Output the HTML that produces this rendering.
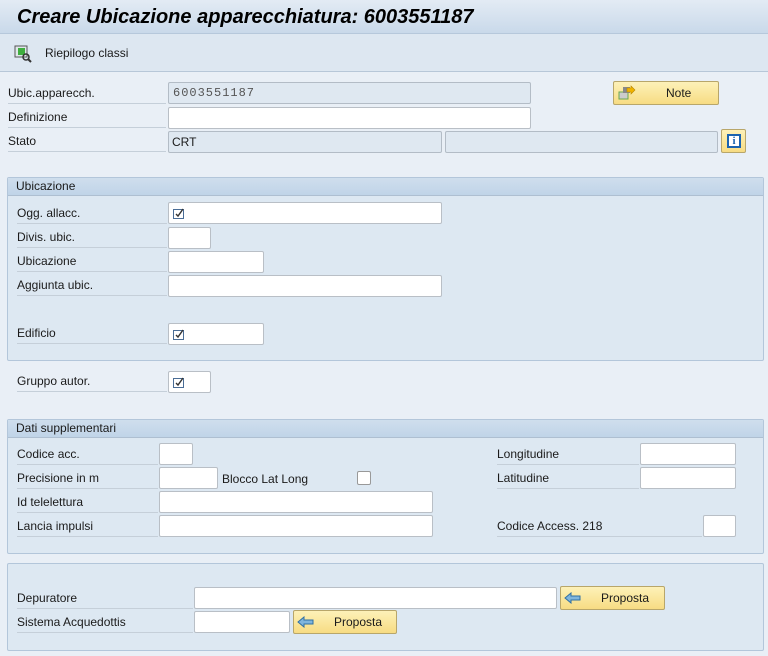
<!DOCTYPE html>
<html><head><meta charset="utf-8"><style>
*{box-sizing:border-box;margin:0;padding:0}
body{width:768px;height:656px;background:#e9eff6;font-family:"Liberation Sans",sans-serif;font-size:12px;color:#1a1a1a;position:relative;overflow:hidden}
.a{position:absolute}
.title{left:0;top:0;width:768px;height:34px;background:linear-gradient(#e3ebf4,#c9d9ea);border-bottom:1px solid #b6c8db}
.title span{position:absolute;left:17px;top:6px;font-size:20px;font-weight:bold;font-style:italic;color:#000}
.tb{left:0;top:34px;width:768px;height:38px;background:#dde7f1;border-bottom:1px solid #b7c7d8}
.lbl{position:absolute;border-bottom:1px solid #c5cfd9;height:22px;line-height:23px;white-space:nowrap}
.in{position:absolute;background:#fff;border:1px solid #b9bfc6;border-radius:2px;height:22px}
.ro{background:#dfe8f1;border-color:#b3bcc6}
.grp{position:absolute;background:#dde8f2;border:1px solid #b3c6da;border-radius:2px}
.gh{position:absolute;left:0;top:0;right:0;height:18px;background:linear-gradient(#cfdeed,#c0d4e8);border-bottom:1px solid #aebfd1;padding-left:8px;line-height:17px}
.btn{position:absolute;background:linear-gradient(#fdf1b8,#f7dc83);border:1px solid #b8a66a;border-radius:2px;height:24px;line-height:22px}
.chk{position:absolute;left:3px;top:4px}
</style></head><body>
<div class="a title"><span>Creare Ubicazione apparecchiatura: 6003551187</span></div>
<div class="a tb">
<svg class="a" style="left:13px;top:10px" width="20" height="20" viewBox="0 0 20 20"><rect x="2" y="2" width="12" height="11" fill="#e0e6ea" stroke="#555"/><rect x="5" y="4" width="7" height="7" fill="#3fae3f"/><circle cx="13" cy="13" r="3" fill="none" stroke="#333" stroke-width="1.5"/><path d="M15 15l3 3" stroke="#333" stroke-width="2"/></svg>
<span class="a" style="left:45px;top:12px">Riepilogo classi</span></div>

<div class="lbl" style="left:8px;top:82px;width:158px">Ubic.apparecch.</div>
<div class="in ro" style="left:168px;top:82px;width:363px;font-family:'Liberation Mono',monospace;color:#555;line-height:20px;padding-left:4px;letter-spacing:1px">6003551187</div>
<div class="lbl" style="left:8px;top:106px;width:158px">Definizione</div>
<div class="in" style="left:168px;top:107px;width:363px"></div>
<div class="lbl" style="left:8px;top:130px;width:158px">Stato</div>
<div class="in ro" style="left:168px;top:131px;width:274px;line-height:20px;padding-left:3px">CRT</div>
<div class="in ro" style="left:445px;top:131px;width:273px"></div>
<div class="btn" style="left:721px;top:129px;width:25px"><div class="a" style="left:5px;top:4px;width:14px;height:14px;border:2px solid #1a63b0;background:#fff;color:#1a63b0;font-weight:bold;font-size:11px;line-height:10px;text-align:center;font-family:'Liberation Serif',serif">i</div></div>
<div class="btn" style="left:613px;top:81px;width:106px"><svg class="a" style="left:4px;top:3px" width="18" height="16"><rect x="1" y="7" width="9" height="7" fill="#ccc" stroke="#6aa84f"/><rect x="5" y="2" width="7" height="6" fill="#888"/><path d="M9 3h4v-2l4 4-4 4v-2h-4z" fill="#f0b400" stroke="#b88500" stroke-width=".6"/></svg><span class="a" style="left:52px;top:0">Note</span></div>

<div class="grp" style="left:7px;top:177px;width:757px;height:184px"><div class="gh">Ubicazione</div></div>
<div class="lbl" style="left:17px;top:202px;width:150px">Ogg. allacc.</div>
<div class="in" style="left:168px;top:202px;width:274px"><svg class="chk" width="14" height="13"><rect x="1.5" y="2.5" width="10" height="9" fill="#fff" stroke="#4a6d96"/><path d="M4 7l2 2 5-7" fill="none" stroke="#333" stroke-width="1.4"/></svg></div>
<div class="lbl" style="left:17px;top:226px;width:150px">Divis. ubic.</div>
<div class="in" style="left:168px;top:227px;width:43px"></div>
<div class="lbl" style="left:17px;top:250px;width:150px">Ubicazione</div>
<div class="in" style="left:168px;top:251px;width:96px"></div>
<div class="lbl" style="left:17px;top:274px;width:150px">Aggiunta ubic.</div>
<div class="in" style="left:168px;top:275px;width:274px"></div>
<div class="lbl" style="left:17px;top:322px;width:150px">Edificio</div>
<div class="in" style="left:168px;top:323px;width:96px"><svg class="chk" width="14" height="13"><rect x="1.5" y="2.5" width="10" height="9" fill="#fff" stroke="#4a6d96"/><path d="M4 7l2 2 5-7" fill="none" stroke="#333" stroke-width="1.4"/></svg></div>

<div class="lbl" style="left:17px;top:370px;width:150px">Gruppo autor.</div>
<div class="in" style="left:168px;top:371px;width:43px"><svg class="chk" width="14" height="13"><rect x="1.5" y="2.5" width="10" height="9" fill="#fff" stroke="#4a6d96"/><path d="M4 7l2 2 5-7" fill="none" stroke="#333" stroke-width="1.4"/></svg></div>

<div class="grp" style="left:7px;top:419px;width:757px;height:135px"><div class="gh">Dati supplementari</div></div>
<div class="lbl" style="left:17px;top:443px;width:141px">Codice acc.</div>
<div class="in" style="left:159px;top:443px;width:34px"></div>
<div class="lbl" style="left:17px;top:467px;width:141px">Precisione in m</div>
<div class="in" style="left:159px;top:467px;width:59px"></div>
<span class="a" style="left:222px;top:472px">Blocco Lat Long</span>
<div class="a" style="left:357px;top:471px;width:14px;height:14px;background:#fff;border:1px solid #999;border-radius:2px"></div>
<div class="lbl" style="left:17px;top:491px;width:141px">Id telelettura</div>
<div class="in" style="left:159px;top:491px;width:274px"></div>
<div class="lbl" style="left:17px;top:515px;width:141px">Lancia impulsi</div>
<div class="in" style="left:159px;top:515px;width:274px"></div>
<div class="lbl" style="left:497px;top:443px;width:142px">Longitudine</div>
<div class="in" style="left:640px;top:443px;width:96px"></div>
<div class="lbl" style="left:497px;top:467px;width:142px">Latitudine</div>
<div class="in" style="left:640px;top:467px;width:96px"></div>
<div class="lbl" style="left:497px;top:515px;width:205px">Codice Access. 218</div>
<div class="in" style="left:703px;top:515px;width:33px"></div>

<div class="grp" style="left:7px;top:563px;width:757px;height:88px"></div>
<div class="lbl" style="left:17px;top:587px;width:176px">Depuratore</div>
<div class="in" style="left:194px;top:587px;width:363px"></div>
<div class="lbl" style="left:17px;top:611px;width:176px">Sistema Acquedottis</div>
<div class="in" style="left:194px;top:611px;width:96px"></div>
<div class="btn" style="left:560px;top:586px;width:105px"><svg class="a" style="left:3px;top:5px" width="18" height="12"><path d="M1 6l6-5v3h9v4h-9v3z" fill="#7fb5dd" stroke="#2f6fa3"/></svg><span class="a" style="left:40px;top:0">Proposta</span></div>
<div class="btn" style="left:293px;top:610px;width:104px"><svg class="a" style="left:3px;top:5px" width="18" height="12"><path d="M1 6l6-5v3h9v4h-9v3z" fill="#7fb5dd" stroke="#2f6fa3"/></svg><span class="a" style="left:40px;top:0">Proposta</span></div>
</body></html>
